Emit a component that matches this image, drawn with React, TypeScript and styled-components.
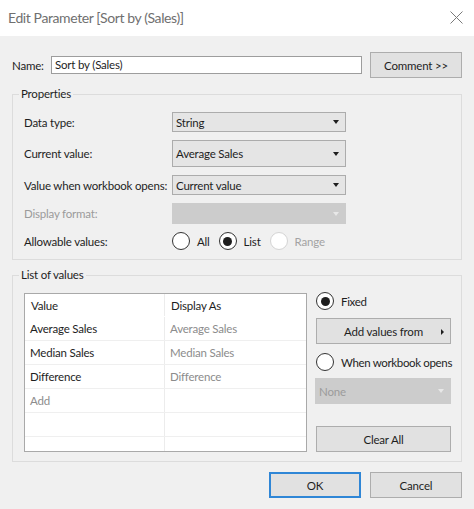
import styled, { createGlobalStyle } from "styled-components";

const GlobalStyle = createGlobalStyle`
  html, body {
    margin: 0;
    padding: 0;
    background: #f0f0f0;
  }
  body {
    font-family: Lato, "Noto Sans", sans-serif;
    font-size: 11.5px;
    letter-spacing: -0.2px;
    color: #1e1e1e;
    white-space: nowrap;
  }
`;

const Window = styled.div`
  display: flex;
  flex-direction: column;
  width: 474px;
  min-height: 509px;
`;

const TitleBar = styled.div`
  display: flex;
  align-items: center;
  justify-content: space-between;
  height: 36px;
  padding: 0 11px 0 8px;
  background: #ffffff;
`;

const Title = styled.span`
  font-size: 14px;
  letter-spacing: -0.4px;
  color: #707070;
  padding-bottom: 2px;
`;

const CloseIcon = styled.svg`
  width: 13px;
  height: 13px;
  margin-top: -1px;
`;

const Body = styled.div`
  flex: 1;
  display: flex;
  flex-direction: column;
  padding: 16px 12px 11px 12px;
  background: #f0f0f0;
`;

const NameRow = styled.div`
  display: flex;
  align-items: center;
`;

const NameLabel = styled.span`
  width: 39px;
`;

const TextInput = styled.div`
  width: 311px;
  height: 18px;
  box-sizing: border-box;
  border: 1px solid #9d9d9d;
  background: #ffffff;
  padding-left: 3px;
  line-height: 16px;
  margin-right: 8px;
`;

const Button = styled.div<{ $primary?: boolean; $width?: number }>`
  display: flex;
  align-items: center;
  justify-content: center;
  position: relative;
  width: ${(p) => p.$width ?? 92}px;
  height: 26px;
  box-sizing: border-box;
  background: #e1e1e1;
  border: ${(p) => (p.$primary ? "2px solid #2f86d6" : "1px solid #adadad")};
  color: #1e1e1e;
`;

const Group = styled.fieldset<{ $top: number }>`
  margin: ${(p) => p.$top}px 0 0 0;
  padding: 10px 10px 9px 11px;
  border: 1px solid #dcdcdc;
  min-width: 0;
`;

const Legend = styled.legend`
  margin-left: -5px;
  padding: 0 2px;
  line-height: 16px;
  color: #1e1e1e;
`;

const PropGrid = styled.div`
  display: grid;
  grid-template-columns: 148px 174px;
  row-gap: 8px;
  align-items: center;
`;

const PropLabel = styled.span<{ $disabled?: boolean }>`
  color: ${(p) => (p.$disabled ? "#9b9b9b" : "#1e1e1e")};
`;

const Select = styled.div<{ $height?: number; $disabled?: boolean }>`
  display: flex;
  align-items: center;
  justify-content: space-between;
  height: ${(p) => p.$height ?? 20}px;
  box-sizing: border-box;
  padding: 0 6px 0 3px;
  background: ${(p) => (p.$disabled ? "#cccccc" : "#e5e5e5")};
  border: 1px solid ${(p) => (p.$disabled ? "#cccccc" : "#acacac")};
  color: ${(p) => (p.$disabled ? "#9b9b9b" : "#1e1e1e")};
`;

const Arrow = styled.span<{ $disabled?: boolean }>`
  width: 0;
  height: 0;
  border-left: 3.5px solid transparent;
  border-right: 3.5px solid transparent;
  border-top: 4px solid ${(p) => (p.$disabled ? "#e8e8e8" : "#1e1e1e")};
`;

const RadioRow = styled.div`
  display: flex;
  align-items: center;
  height: 18px;
`;

const RadioOption = styled.label<{ $disabled?: boolean }>`
  display: flex;
  align-items: center;
  gap: 7px;
  margin-right: 9px;
  color: ${(p) => (p.$disabled ? "#a3a3a3" : "#1e1e1e")};
`;

const RadioCircle = styled.span<{ $checked?: boolean; $disabled?: boolean }>`
  display: flex;
  flex-shrink: 0;
  align-items: center;
  justify-content: center;
  width: 18px;
  height: 18px;
  box-sizing: border-box;
  border-radius: 50%;
  background: #ffffff;
  border: 1px solid ${(p) => (p.$disabled ? "#d4d4d4" : "#333333")};

  &::after {
    content: "";
    display: ${(p) => (p.$checked ? "block" : "none")};
    width: 9px;
    height: 9px;
    border-radius: 50%;
    background: #1e1e1e;
  }
`;

const ListLayout = styled.div`
  display: grid;
  grid-template-columns: 283px 135px;
  column-gap: 9px;
`;

const Table = styled.div`
  height: 159px;
  box-sizing: border-box;
  border: 1px solid #a9a9a9;
  background: #ffffff;
  overflow: hidden;
`;

const TableRow = styled.div<{ $header?: boolean }>`
  display: grid;
  grid-template-columns: 140px 1fr;
  height: ${(p) => (p.$header ? 23 : 24)}px;
  box-sizing: border-box;
  border-bottom: 1px solid ${(p) => (p.$header ? "transparent" : "#efefef")};
`;

const Cell = styled.div<{ $tone?: "dark" | "muted" }>`
  display: flex;
  align-items: center;
  padding-left: ${(p) => (p.$tone === "dark" ? 6 : 5)}px;
  color: ${(p) => (p.$tone === "muted" ? "#8c8c8c" : "#1e1e1e")};

  &:first-child {
    border-right: 1px solid #ececec;
  }
`;

const SidePanel = styled.div`
  display: flex;
  flex-direction: column;
`;

const SideRadio = styled(RadioOption)<{ $gap: number }>`
  margin: ${(p) => p.$gap}px 0 0 0;
  height: 18px;
  letter-spacing: -0.35px;
`;

const SideSelect = styled(Select)`
  margin-top: 7px;
  width: 136px;
  margin-left: -1px;
  height: 26px;
`;

const SubArrow = styled.span`
  position: absolute;
  right: 6px;
  top: 10px;
  width: 0;
  height: 0;
  border-top: 3px solid transparent;
  border-bottom: 3px solid transparent;
  border-left: 3px solid #1e1e1e;
`;

const Footer = styled.div`
  display: flex;
  justify-content: flex-end;
  gap: 9px;
  margin-top: 10px;
`;

const rows: { value: string; display: string }[] = [
  { value: "Average Sales", display: "Average Sales" },
  { value: "Median Sales", display: "Median Sales" },
  { value: "Difference", display: "Difference" },
];

export default function App() {
  return (
    <Window>
      <GlobalStyle />
      <TitleBar>
        <Title>Edit Parameter [Sort by (Sales)]</Title>
        <CloseIcon viewBox="0 0 13 13">
          <path d="M0.5 0.5 L12.5 12.5 M12.5 0.5 L0.5 12.5" stroke="#7a7a7a" strokeWidth="1" fill="none" />
        </CloseIcon>
      </TitleBar>
      <Body>
        <NameRow>
          <NameLabel>Name:</NameLabel>
          <TextInput>Sort by (Sales)</TextInput>
          <Button>Comment &gt;&gt;</Button>
        </NameRow>

        <Group $top={8}>
          <Legend>Properties</Legend>
          <PropGrid>
            <PropLabel>Data type:</PropLabel>
            <Select>
              String
              <Arrow />
            </Select>
            <PropLabel>Current value:</PropLabel>
            <Select $height={27}>
              Average Sales
              <Arrow />
            </Select>
            <PropLabel>Value when workbook opens:</PropLabel>
            <Select>
              Current value
              <Arrow />
            </Select>
            <PropLabel $disabled>Display format:</PropLabel>
            <Select $height={21} $disabled>
              <span />
              <Arrow $disabled />
            </Select>
            <PropLabel>Allowable values:</PropLabel>
            <RadioRow>
              <RadioOption>
                <RadioCircle />
                All
              </RadioOption>
              <RadioOption>
                <RadioCircle $checked />
                List
              </RadioOption>
              <RadioOption $disabled>
                <RadioCircle $disabled />
                Range
              </RadioOption>
            </RadioRow>
          </PropGrid>
        </Group>

        <Group $top={7}>
          <Legend>List of values</Legend>
          <ListLayout>
            <Table>
              <TableRow $header>
                <Cell $tone="dark">Value</Cell>
                <Cell $tone="dark">Display As</Cell>
              </TableRow>
              {rows.map((r) => (
                <TableRow key={r.value}>
                  <Cell>{r.value}</Cell>
                  <Cell $tone="muted">{r.display}</Cell>
                </TableRow>
              ))}
              <TableRow>
                <Cell $tone="muted">Add</Cell>
                <Cell />
              </TableRow>
              <TableRow>
                <Cell />
                <Cell />
              </TableRow>
              <TableRow>
                <Cell />
                <Cell />
              </TableRow>
            </Table>
            <SidePanel>
              <SideRadio $gap={-1}>
                <RadioCircle $checked />
                Fixed
              </SideRadio>
              <Button $width={135} style={{ marginTop: 8 }}>
                Add values from
                <SubArrow />
              </Button>
              <SideRadio $gap={9}>
                <RadioCircle />
                When workbook opens
              </SideRadio>
              <SideSelect $disabled>
                None
                <Arrow $disabled />
              </SideSelect>
              <Button $width={135} style={{ marginTop: "auto" }}>
                Clear All
              </Button>
            </SidePanel>
          </ListLayout>
        </Group>

        <Footer>
          <Button $primary>OK</Button>
          <Button>Cancel</Button>
        </Footer>
      </Body>
    </Window>
  );
}
